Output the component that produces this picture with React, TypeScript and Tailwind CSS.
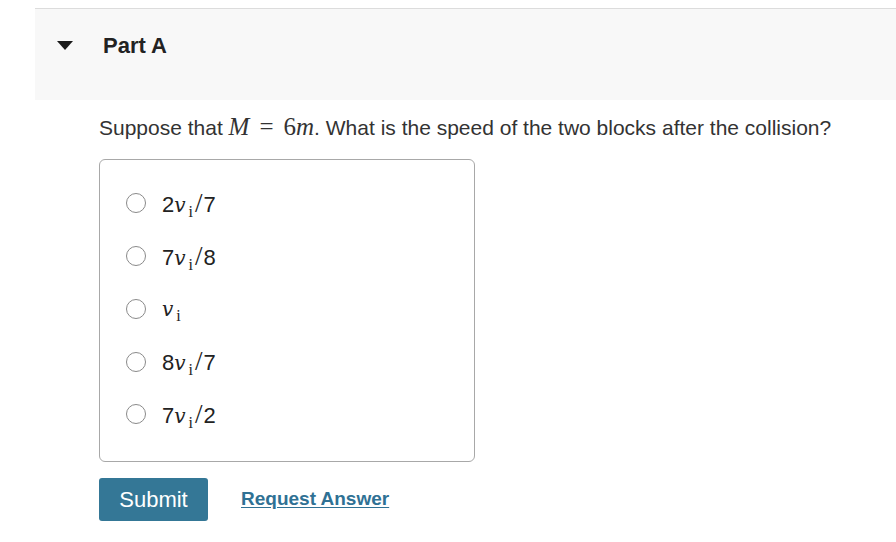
import React from "react";

const sans = { fontFamily: '"Liberation Sans", Arial, sans-serif' };

function Vi() {
  return (
    <span className="whitespace-nowrap">
      <span className="font-['DejaVu_Serif'] text-[20px] italic">v</span>
      <span className="relative top-[5px] ml-[3px] font-['Liberation_Serif'] text-[16px]">i</span>
    </span>
  );
}

const options: { pre?: string; post?: string }[] = [
  { pre: "2", post: "7" },
  { pre: "7", post: "8" },
  {},
  { pre: "8", post: "7" },
  { pre: "7", post: "2" },
];

export default function App() {
  return (
    <div className="min-h-[542px] w-[896px] bg-white pt-2 text-[#333]" style={sans}>
      <section className="ml-[35px] flex h-[92px] items-start border-t border-[#dcdcdc] bg-[#f8f8f8] pl-[22px] pt-[23px]">
        <span className="mt-[9px] h-0 w-0 border-x-[8.5px] border-t-[9px] border-x-transparent border-t-[#1a1a1a]" />
        <h2 className="ml-[30px] text-[22px] font-bold leading-[28px] text-[#222]">Part A</h2>
      </section>

      <div className="pl-[99px] pt-[14px]">
        <p className="text-[21px] leading-[26px]">
          Suppose that{" "}
          <span className="font-['Liberation_Serif'] text-[25px] italic">M</span>
          <span className="mx-[10px] font-['Liberation_Serif'] text-[25px]">=</span>
          <span className="font-['Liberation_Serif'] text-[25px]">6</span>
          <span className="font-['Liberation_Serif'] text-[25px] italic">m</span>. What is the speed of the two blocks after the collision?
        </p>

        <div className="mt-[18px] w-[376px] rounded-[6px] border border-[#a8a8a8] pb-[20px] pt-[17px]">
          {options.map((o, i) => (
            <label key={i} className="flex h-[52.75px] items-center pl-[26px]">
              <span className="h-[20px] w-[20px] rounded-full border-[1.5px] border-[#8a8a8a] bg-white" />
              <span className="ml-[16px] text-[22px] text-[#222]">
                {o.pre}
                <Vi />
                {o.post && (
                  <>
                    <span className="ml-[2px] mr-[1px] font-['Liberation_Serif'] text-[27px]">/</span>
                    {o.post}
                  </>
                )}
              </span>
            </label>
          ))}
        </div>

        <div className="mt-[16px] flex items-center">
          <button className="h-[43px] w-[109px] rounded-[3px] bg-[#347796] text-[22px] text-white">Submit</button>
          <a className="ml-[33px] text-[19px] font-bold text-[#2f7194] underline underline-offset-2" href="#">
            Request Answer
          </a>
        </div>
      </div>
    </div>
  );
}
